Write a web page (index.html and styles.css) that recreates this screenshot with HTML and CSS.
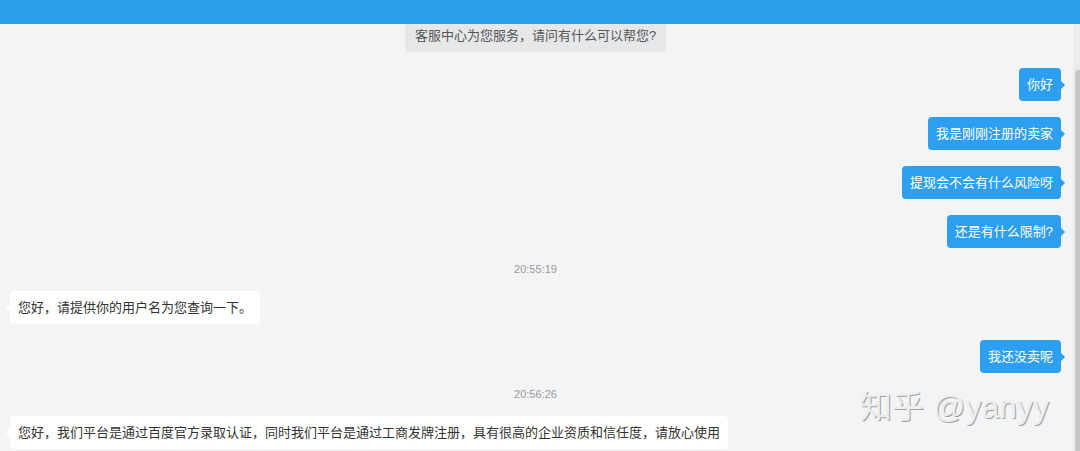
FILE: index.html
```html
<!DOCTYPE html>
<html lang="zh-CN">
<head>
    <meta charset="UTF-8">
    <meta name="viewport" content="width=device-width, initial-scale=1.0">
    <title>在线客服</title>
    <link rel="stylesheet" href="styles.css">
</head>
<body>
    <header class="topbar"></header>
    <div class="page">
        <div class="chat">
            <div class="system">客服中心为您服务，请问有什么可以帮您?</div>
            <div class="msg me"><span class="bubble">你好</span></div>
            <div class="msg me"><span class="bubble">我是刚刚注册的卖家</span></div>
            <div class="msg me"><span class="bubble">提现会不会有什么风险呀</span></div>
            <div class="msg me"><span class="bubble">还是有什么限制?</span></div>
            <div class="time">20:55:19</div>
            <div class="msg them"><span class="bubble">您好，请提供你的用户名为您查询一下。</span></div>
            <div class="msg me"><span class="bubble">我还没卖呢</span></div>
            <div class="time">20:56:26</div>
            <div class="msg them"><span class="bubble">您好，我们平台是通过百度官方录取认证，同时我们平台是通过工商发牌注册，具有很高的企业资质和信任度，请放心使用</span></div>
        </div>
        <div class="rail"><div class="thumb"></div></div>
    </div>
    <div class="mark">知乎 @yanyy</div>
</body>
</html>
```

FILE: styles.css
```css
body {
    margin: 0;
    background-color: #f3f4f6;
    font-family: "Liberation Sans", "Noto Sans CJK SC", sans-serif;
    font-size: 13px;
    color: #333;
    height: 451px;
    overflow: hidden;
}
.topbar {
    position: fixed;
    top: 0;
    left: 0;
    right: 0;
    height: 24px;
    background-color: #2d9fe9;
    z-index: 2;
}
.page {
    display: flex;
    height: 451px;
}
.chat {
    flex: 1;
    display: flex;
    flex-direction: column;
    gap: 16px;
    padding: 19px 12px 0 10px;
}
.system {
    align-self: center;
    background-color: #e6e7e9;
    color: #555;
    padding: 8px 10px;
    line-height: 17px;
    border-radius: 3px;
}
.msg {
    display: flex;
}
.msg.me {
    justify-content: flex-end;
}
.bubble {
    position: relative;
    padding: 8px;
    line-height: 17px;
    border-radius: 4px;
    white-space: nowrap;
}
.me .bubble {
    background-color: #2e9ff0;
    color: #fff;
}
.them .bubble {
    background-color: #fff;
    color: #333;
}
/* little pointer on the side of each bubble */
.bubble::after {
    content: "";
    position: absolute;
    top: 12px;
    border: 5px solid transparent;
}
.me .bubble::after {
    right: -9px;
    border-left: 5px solid #2e9ff0;
}
.them .bubble::after {
    left: -9px;
    border-right: 5px solid #fff;
}
.time {
    text-align: center;
    color: #999;
    font-size: 11px;
    line-height: 11px;
    height: 11px;
}
.rail {
    width: 7px;
    margin-top: 24px;
    background-color: #ececee;
    display: flex;
    flex-direction: column;
    padding-top: 46px;
}
.thumb {
    flex: 1;
    margin-left: 2px;
    background-color: #c6c6c8;
    border-radius: 3px 0 0 0;
}
.mark {
    position: absolute;
    left: 860px;
    top: 381px;
    font-size: 32px;
    color: #eeeeee;
    text-shadow: 1px 1px 0 #a0a0a0;
}
```
